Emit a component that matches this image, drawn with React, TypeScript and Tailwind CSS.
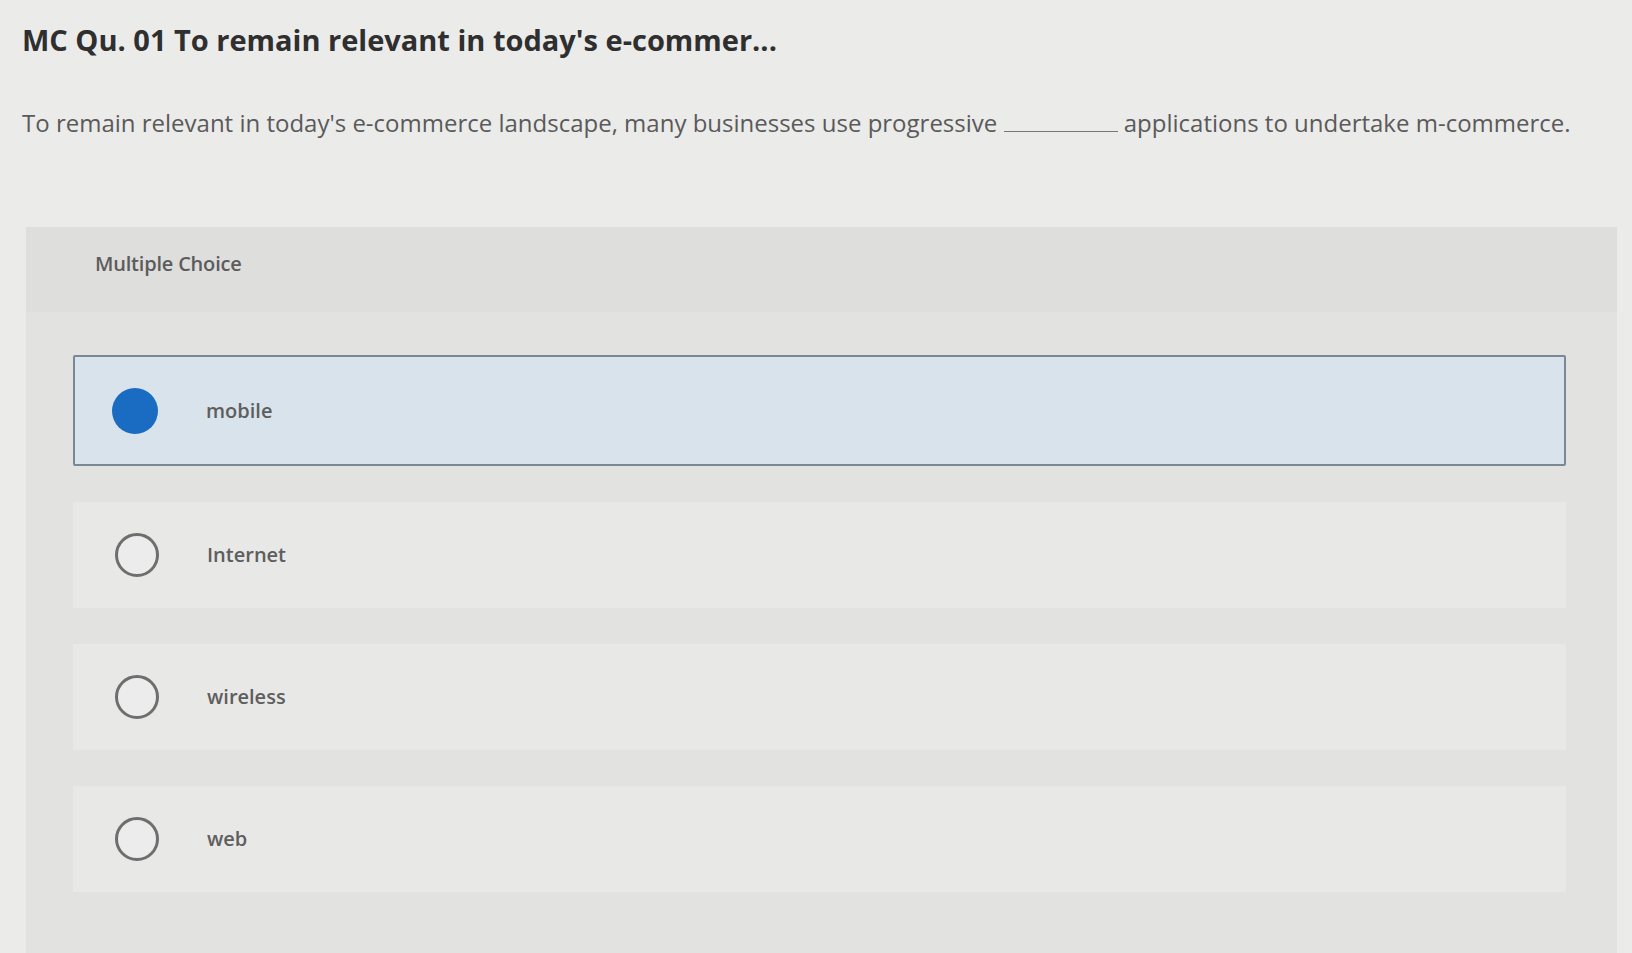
import { useState } from 'react'

const choices = ['mobile', 'Internet', 'wireless', 'web']

function Radio({ checked }: { checked: boolean }) {
  if (checked) {
    return <span className="block w-[46px] h-[46px] rounded-full bg-[#1a6cc2] shrink-0" />
  }
  return <span className="block w-[44px] h-[44px] rounded-full border-[3px] border-[#6e6e6e] bg-[#ececec] shrink-0" />
}

export default function App() {
  const [selected, setSelected] = useState(0)

  return (
    <div
      className="min-h-[953px] w-full bg-[#ebebea] text-[#3a3a3a] overflow-hidden"
      style={{ fontFamily: '"Open Sans", "Liberation Sans", sans-serif' }}
    >
      <div className="pl-[22px] pt-[22px]">
        <h1 className="text-[29px] leading-[36px] font-bold text-[#2f2f2f]">
          MC Qu. 01 To remain relevant in today's e-commer...
        </h1>
        <p className="mt-[48px] text-[24px] leading-[34px] text-[#5a5a5a]">
          To remain relevant in today's e-commerce landscape, many businesses use progressive{' '}
          <span className="inline-block w-[114px] border-b border-[#777] align-baseline" />{' '}
          applications to undertake m-commerce.
        </p>
      </div>

      <div className="ml-[26px] mr-[15px] mt-[87px] bg-[#e2e2e1] min-h-[726px]">
        <div className="h-[85px] bg-[#dededd] pl-[69px] pb-[12px] flex items-center">
          <span className="text-[20px] font-semibold tracking-[-0.2px] text-[#5c5c5c]">Multiple Choice</span>
        </div>

        <div className="mt-[43px] pl-[47px] pr-[51px] flex flex-col gap-[36px]">
          {choices.map((c, i) => {
            const on = selected === i
            return (
              <button
                key={c}
                onClick={() => setSelected(i)}
                className={
                  on
                    ? 'h-[111px] w-full flex items-center text-left bg-[#d9e3eb] border-2 border-[#7a8896] rounded-[2px] pl-[37px]'
                    : 'h-[106px] w-full flex items-center text-left bg-[#e8e8e7] pl-[42px]'
                }
              >
                <Radio checked={on} />
                <span className="ml-[48px] text-[20px] font-semibold text-[#5e5e5e]">{c}</span>
              </button>
            )
          })}
        </div>
      </div>
    </div>
  )
}
